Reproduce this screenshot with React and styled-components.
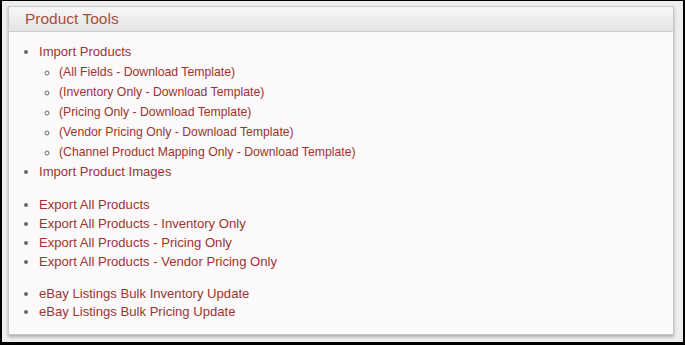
import React from 'react';
import styled, { createGlobalStyle } from 'styled-components';

const GlobalStyle = createGlobalStyle`
  html, body {
    margin: 0;
    padding: 0;
    background: #000;
  }
`;

const Frame = styled.div`
  box-sizing: border-box;
  width: 685px;
  height: 345px;
  border-style: solid;
  border-color: #000;
  border-width: 1px 2px 3px 2px;
  background: #eeeeee;
  padding: 5px 9px 8px 6px;
  display: flex;
  flex-direction: column;
  font-family: "Liberation Sans", Arial, sans-serif;
`;

const Panel = styled.section`
  flex: 1;
  display: flex;
  flex-direction: column;
  border: 1px solid #c9c9c9;
  background: #fbf9f9;
  box-shadow: 0 2px 3px rgba(0, 0, 0, 0.28);
`;

const Header = styled.header`
  height: 24px;
  display: flex;
  align-items: center;
  padding-left: 16px;
  background: linear-gradient(to bottom, #f7f7f7, #e4e4e4);
  border-bottom: 1px solid #cfcfcf;
`;

const Title = styled.h2`
  margin: 0;
  font-size: 15.5px;
  font-weight: normal;
  color: #a84e3c;
`;

const Body = styled.div`
  padding: 11px 0 13px 0;
`;

const List = styled.ul`
  margin: ${(p) => (p.$first ? '0' : '14px')} 0 0 0;
  padding-left: 30px;
  list-style: disc;
  color: #6a6a6a;
  font-size: 13.1px;
  line-height: ${(p) => p.$lh || 18}px;
`;

const SubList = styled.ul`
  margin: 1px 0 1px 0;
  padding-left: 20px;
  list-style: circle;
  font-size: 12.25px;
  line-height: 20px;
`;

const Link = styled.a`
  color: #9c3430;
  text-decoration: none;
  cursor: pointer;
`;

const templates = [
  '(All Fields - Download Template)',
  '(Inventory Only - Download Template)',
  '(Pricing Only - Download Template)',
  '(Vendor Pricing Only - Download Template)',
  '(Channel Product Mapping Only - Download Template)',
];

const exportsList = [
  'Export All Products',
  'Export All Products - Inventory Only',
  'Export All Products - Pricing Only',
  'Export All Products - Vendor Pricing Only',
];

const ebay = ['eBay Listings Bulk Inventory Update', 'eBay Listings Bulk Pricing Update'];

const App = () => {
  return (
    <>
      <GlobalStyle />
      <Frame>
        <Panel>
          <Header>
            <Title>Product Tools</Title>
          </Header>
          <Body>
            <List $first>
              <li>
                <Link>Import Products</Link>
                <SubList>
                  {templates.map((t) => (
                    <li key={t}>
                      <Link>{t}</Link>
                    </li>
                  ))}
                </SubList>
              </li>
              <li>
                <Link>Import Product Images</Link>
              </li>
            </List>
            <List $lh={19}>
              {exportsList.map((t) => (
                <li key={t}>
                  <Link>{t}</Link>
                </li>
              ))}
            </List>
            <List>
              {ebay.map((t) => (
                <li key={t}>
                  <Link>{t}</Link>
                </li>
              ))}
            </List>
          </Body>
        </Panel>
      </Frame>
    </>
  );
};

export default App;
